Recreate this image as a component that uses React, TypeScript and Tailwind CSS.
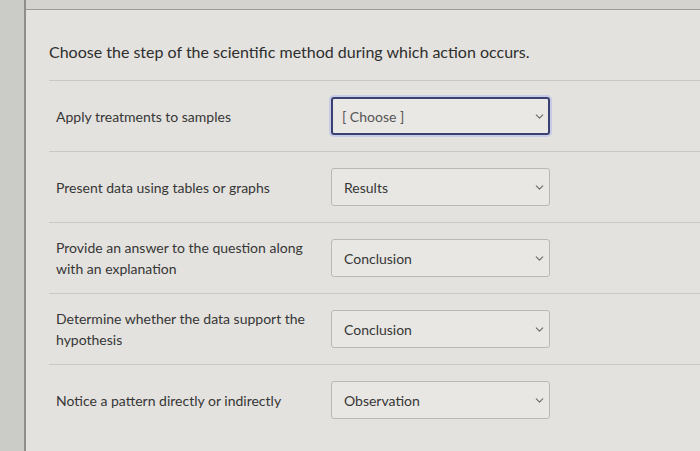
import React from 'react';
import { ChevronDown } from 'lucide-react';

interface RowProps {
    label: React.ReactNode;
    value: string;
    active?: boolean;
}

const rows: RowProps[] = [
    { label: 'Apply treatments to samples', value: '[ Choose ]', active: true },
    { label: 'Present data using tables or graphs', value: 'Results' },
    { label: 'Provide an answer to the question along with an explanation', value: 'Conclusion' },
    { label: 'Determine whether the data support the hypothesis', value: 'Conclusion' },
    { label: 'Notice a pattern directly or indirectly', value: 'Observation' },
];

const MatchRow: React.FC<RowProps> = ({ label, value, active }) => (
    <div className="flex h-[71px] items-center border-t border-[#c9c8c4] pl-[7px]">
        <div className="w-[275px] pr-5 text-[14px] leading-[21px] text-[#363636]">{label}</div>
        {active ? (
            <div className="rounded-[3px] shadow-[0_0_0_2px_#c8cbe6]">
                <div className="flex h-[38px] w-[219px] items-center justify-between rounded-[3px] border-2 border-[#3b4073] bg-[#e9e8e5] pl-[9px] pr-[2px] text-[14px] text-[#555]">
                    <span>{value}</span>
                    <ChevronDown size={13} strokeWidth={2} className="text-[#6a6a6a]" />
                </div>
            </div>
        ) : (
            <div className="flex h-[38px] w-[219px] items-center justify-between rounded-[3px] border border-[#b9b8b4] bg-[#e8e7e3] pl-[12px] pr-[3px] text-[14px] text-[#363636]">
                <span>{value}</span>
                <ChevronDown size={13} strokeWidth={2} className="text-[#6a6a6a]" />
            </div>
        )}
    </div>
);

export default function App() {
    return (
        <div className="flex h-[451px] w-[700px] overflow-hidden bg-[#e3e2de] font-['Lato',sans-serif]">
            <div className="w-[26px] shrink-0 border-r-2 border-[#8e8e8b] bg-[#cbcbc8]" />
            <div className="flex flex-1 flex-col">
                <div className="h-[10px] shrink-0 border-b border-[#9c9b98] bg-[#d4d3d0]" />
                <div className="pl-[23px]">
                    <h1 className="mt-[30px] mb-[16px] text-[16px] leading-[24px] text-[#2e2e2e]">
                        Choose the step of the scientific method during which action occurs.
                    </h1>
                    {rows.map((r, i) => (
                        <MatchRow key={i} {...r} />
                    ))}
                </div>
            </div>
        </div>
    );
}
